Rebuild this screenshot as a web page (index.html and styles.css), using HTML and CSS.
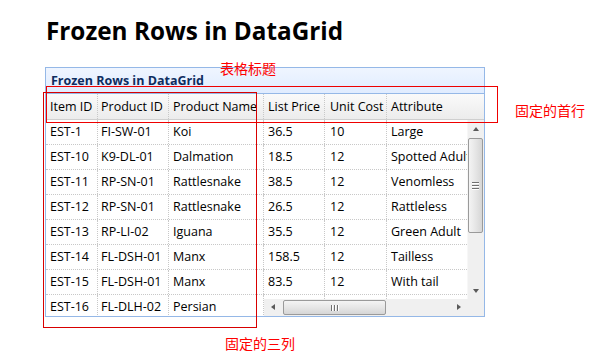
FILE: index.html
```html
<!DOCTYPE html>
<html>
<head>
<meta charset="utf-8">
<link rel="stylesheet" href="styles.css">
</head>
<body>
<div class="page">
  <h1 class="title">Frozen Rows in DataGrid</h1>
  <div class="panel">
    <div class="panel-head">Frozen Rows in DataGrid</div>
    <div class="grid">
      <div class="view frozen">
        <div class="hrow">
          <div class="cell c1">Item ID</div>
          <div class="cell c2">Product ID</div>
          <div class="cell c3">Product Name</div>
        </div>
        <div class="body">
          <div class="row"><div class="cell c1">EST-1</div><div class="cell c2">FI-SW-01</div><div class="cell c3">Koi</div></div>
          <div class="row"><div class="cell c1">EST-10</div><div class="cell c2">K9-DL-01</div><div class="cell c3">Dalmation</div></div>
          <div class="row"><div class="cell c1">EST-11</div><div class="cell c2">RP-SN-01</div><div class="cell c3">Rattlesnake</div></div>
          <div class="row"><div class="cell c1">EST-12</div><div class="cell c2">RP-SN-01</div><div class="cell c3">Rattlesnake</div></div>
          <div class="row"><div class="cell c1">EST-13</div><div class="cell c2">RP-LI-02</div><div class="cell c3">Iguana</div></div>
          <div class="row"><div class="cell c1">EST-14</div><div class="cell c2">FL-DSH-01</div><div class="cell c3">Manx</div></div>
          <div class="row"><div class="cell c1">EST-15</div><div class="cell c2">FL-DSH-01</div><div class="cell c3">Manx</div></div>
          <div class="row"><div class="cell c1">EST-16</div><div class="cell c2">FL-DLH-02</div><div class="cell c3">Persian</div></div>
        </div>
      </div>
      <div class="view main">
        <div class="hrow">
          <div class="cell c4">List Price</div>
          <div class="cell c5">Unit Cost</div>
          <div class="cell c6 last">Attribute</div>
        </div>
        <div class="main-body">
          <div class="rows-area">
            <div class="rows">
              <div class="row"><div class="cell c4">36.5</div><div class="cell c5">10</div><div class="cell c6">Large</div></div>
              <div class="row"><div class="cell c4">18.5</div><div class="cell c5">12</div><div class="cell c6">Spotted Adult</div></div>
              <div class="row"><div class="cell c4">38.5</div><div class="cell c5">12</div><div class="cell c6">Venomless</div></div>
              <div class="row"><div class="cell c4">26.5</div><div class="cell c5">12</div><div class="cell c6">Rattleless</div></div>
              <div class="row"><div class="cell c4">35.5</div><div class="cell c5">12</div><div class="cell c6">Green Adult</div></div>
              <div class="row"><div class="cell c4">158.5</div><div class="cell c5">12</div><div class="cell c6">Tailless</div></div>
              <div class="row"><div class="cell c4">83.5</div><div class="cell c5">12</div><div class="cell c6">With tail</div></div>
              <div class="row"><div class="cell c4"></div><div class="cell c5"></div><div class="cell c6"></div></div>
            </div>
            <div class="vscroll">
              <div class="arrow-box"><span class="tri tri-up"></span></div>
              <div class="vthumb"><span class="grip-h"></span><span class="grip-h"></span><span class="grip-h"></span></div>
              <div class="vspace"></div>
              <div class="arrow-box"><span class="tri tri-down"></span></div>
            </div>
          </div>
          <div class="hscroll-row">
            <div class="hscroll">
              <div class="arrow-box h"><span class="tri tri-left"></span></div>
              <div class="hthumb"><span class="grip-v"></span><span class="grip-v"></span><span class="grip-v"></span></div>
              <div class="hspace"></div>
              <div class="arrow-box h"><span class="tri tri-right"></span></div>
            </div>
            <div class="corner"></div>
          </div>
        </div>
      </div>
    </div>
  </div>

  <div class="mark mark-row"></div>
  <div class="mark mark-cols"></div>
  <div class="note note-title">表格标题</div>
  <div class="note note-row">固定的首行</div>
  <div class="note note-cols">固定的三列</div>
</div>
</body>
</html>
```

FILE: styles.css
```css
* { box-sizing: border-box; }
html, body { margin: 0; padding: 0; background: #fff; }
body { width: 597px; height: 362px; overflow: hidden; }

.page {
  position: relative;
  width: 597px;
  height: 362px;
  padding: 16px 0 0 45px;
  font-family: "Open Sans", "Liberation Sans", sans-serif;
}

.title {
  margin: 0 0 21px 1px;
  height: 30px;
  line-height: 30px;
  font-size: 24.3px;
  font-weight: 700;
  color: #000;
}

.panel {
  width: 440px;
  height: 250px;
  border: 1px solid #95B8E7;
  display: flex;
  flex-direction: column;
}

.panel-head {
  height: 26px;
  flex: none;
  border-bottom: 1px solid #95B8E7;
  background: linear-gradient(to bottom, #EFF5FF, #E0ECFF);
  color: #0E2D5F;
  font-size: 12.5px;
  font-weight: 700;
  line-height: 25px;
  padding-left: 5px;
}

.grid {
  flex: 1;
  display: flex;
  overflow: hidden;
}

.view { display: flex; flex-direction: column; overflow: hidden; }
.frozen { width: 218px; flex: none; }
.main { width: 220px; flex: none; }

.hrow {
  height: 26px;
  flex: none;
  display: flex;
  border-bottom: 1px solid #cfcfcf;
  background: linear-gradient(to bottom, #FAFAFA, #ECECEC);
  overflow: hidden;
}

.cell {
  flex: none;
  height: 100%;
  padding: 0 4px;
  font-size: 12.5px;
  line-height: 24px;
  color: #000;
  white-space: nowrap;
  overflow: hidden;
  border-right: 1px dotted #c8c8c8;
}
.hrow .cell { line-height: 25px; }
.cell.last { border-right: none; }

.c1 { width: 52px; }
.c2 { width: 71px; padding-left: 3px; }
.c3 { width: 95px; }
.c4 { width: 61px; }
.c5 { width: 62px; padding-left: 5px; }
.c6 { width: 80px; border-right: none; }

.body { flex: 1; overflow: hidden; }

.row {
  height: 25px;
  display: flex;
  border-bottom: 1px dotted #c8c8c8;
}

.main-body { flex: 1; display: flex; flex-direction: column; overflow: hidden; }
.rows-area { flex: 1; display: flex; overflow: hidden; }
.rows { width: 203px; flex: none; overflow: hidden; }

.vscroll {
  width: 17px;
  flex: none;
  background: #F0F0F0;
  border-left: 1px solid #f7f7f7;
  display: flex;
  flex-direction: column;
  padding: 0 1px 0 0;
}

.arrow-box {
  height: 17px;
  flex: none;
  display: flex;
  align-items: center;
  justify-content: center;
}
.arrow-box.h { width: 17px; height: 100%; }

.tri { width: 0; height: 0; border-style: solid; }
.tri-up { border-width: 0 3.5px 4px 3.5px; border-color: transparent transparent #5a5a5a transparent; }
.tri-down { border-width: 4px 3.5px 0 3.5px; border-color: #5a5a5a transparent transparent transparent; }
.tri-left { border-width: 3.5px 4px 3.5px 0; border-color: transparent #5a5a5a transparent transparent; }
.tri-right { border-width: 3.5px 0 3.5px 4px; border-color: transparent transparent transparent #5a5a5a; }

.vthumb {
  margin-top: 1px;
  height: 95px;
  flex: none;
  border: 1px solid #9a9a9a;
  border-radius: 2px;
  background: linear-gradient(to right, #F4F4F4, #E6E6E6 50%, #D6D6D6);
  display: flex;
  flex-direction: column;
  align-items: center;
  justify-content: center;
  gap: 1px;
}
.grip-h { width: 7px; height: 1px; background: #707070; box-shadow: 0 1px 0 #fff; margin-bottom: 1px; }
.vspace { flex: 1; }

.hscroll-row { height: 17px; flex: none; display: flex; }
.hscroll {
  width: 203px;
  flex: none;
  background: #F0F0F0;
  display: flex;
  padding-bottom: 1px;
}
.hthumb {
  margin: 1px 0 0 2px;
  width: 103px;
  flex: none;
  border: 1px solid #9a9a9a;
  border-radius: 2px;
  background: linear-gradient(to bottom, #F4F4F4, #E6E6E6 50%, #D6D6D6);
  display: flex;
  align-items: center;
  justify-content: center;
  gap: 1px;
}
.grip-v { width: 1px; height: 6px; background: #707070; box-shadow: 1px 0 0 #fff; margin-right: 1px; }
.hspace { flex: 1; }
.corner { flex: 1; background: #F0F0F0; }

.mark { position: absolute; border: 1px solid #ee0000; }
.mark-row { left: 46px; top: 86px; width: 452px; height: 37px; }
.mark-cols { left: 43px; top: 92px; width: 214px; height: 236px; border-color: #d80000; }

.note {
  position: absolute;
  font-family: "Noto Sans CJK SC", sans-serif;
  font-size: 14px;
  line-height: 16px;
  color: #ff0000;
  white-space: nowrap;
}
.note-title { left: 220px; top: 60px; }
.note-row { left: 515px; top: 102px; }
.note-cols { left: 225px; top: 335px; }
```
